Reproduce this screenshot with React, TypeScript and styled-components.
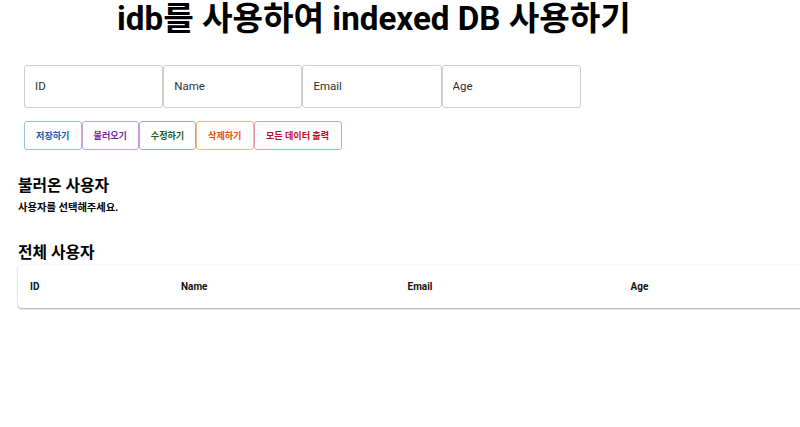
import * as React from 'react';
import styled, { createGlobalStyle } from 'styled-components';

const GlobalStyle = createGlobalStyle`
  html, body {
    margin: 0;
    padding: 0;
    background: #fff;
    overflow: hidden;
    font-family: "Roboto", "Noto Sans CJK KR", sans-serif;
  }
`;

const Page = styled.div`
  width: 800px;
  height: 427px;
  overflow: hidden;
`;

const Title = styled.h1`
  margin: 0;
  padding: 0 52px 0 0;
  height: 65px;
  box-sizing: border-box;
  text-align: center;
  font-size: 33.2px;
  line-height: 38px;
  font-weight: 700;
  color: #000;
  white-space: nowrap;
`;

const Controls = styled.div`
  padding-left: 24px;
`;

const InputRow = styled.div`
  display: flex;
`;

const Field = styled.input`
  width: 139.2px;
  height: 43px;
  box-sizing: border-box;
  padding: 0 10px 2px;
  border: 1px solid #cdcdcd;
  border-radius: 3px;
  background: #fff;
  font-family: inherit;
  font-size: 11.5px;
  font-weight: 400;
  outline: none;

  &::placeholder {
    color: #2e2e2e;
    opacity: 1;
  }
`;

const ButtonRow = styled.div`
  display: flex;
  margin-top: 13px;
`;

const ActionButton = styled.button<{ $tone: string; $edge: string; $width: number }>`
  width: ${p => p.$width}px;
  height: 28.5px;
  box-sizing: border-box;
  padding: 0;
  border: 1px solid ${p => p.$edge};
  border-radius: 3px;
  background: #fff;
  color: ${p => p.$tone};
  font-family: inherit;
  font-size: 9.1px;
  font-weight: 700;
`;

const Section = styled.section`
  padding-left: 18px;
`;

const Heading = styled.h2<{ $top: number }>`
  margin: ${p => p.$top}px 0 0;
  font-size: 15.8px;
  line-height: 22px;
  font-weight: 700;
  color: #000;
`;

const Hint = styled.p`
  margin: 4px 0 0;
  font-size: 10.3px;
  line-height: 14px;
  font-weight: 700;
  color: #000;
`;

const TableCard = styled.div`
  width: 800px;
  height: 43px;
  margin-top: 1px;
  display: grid;
  grid-template-columns: 151px 226.5px 223px 1fr;
  align-items: center;
  padding-left: 12px;
  box-sizing: border-box;
  border-radius: 4px;
  background: #fff;
  box-shadow: 0 1px 2px rgba(0, 0, 0, 0.35), 0 0 2px rgba(0, 0, 0, 0.05);
`;

const ColumnHead = styled.span`
  font-size: 10px;
  font-weight: 700;
  color: #111;
`;

const fields = ['ID', 'Name', 'Email', 'Age'];

const actions = [
    { label: '저장하기', tone: '#0b5cb5', edge: '#93bfe8', width: 57.5 },
    { label: '불러오기', tone: '#7b1fa2', edge: '#c79fdb', width: 57.5 },
    { label: '수정하기', tone: '#1b5e20', edge: '#94bd96', width: 57 },
    { label: '삭제하기', tone: '#e65100', edge: '#eeb98a', width: 57.5 },
    { label: '모든 데이터 출력', tone: '#c00d1e', edge: '#e59aa1', width: 88 },
];

export default function App(): JSX.Element {
    return (
        <Page>
            <GlobalStyle />
            <Title>idb를 사용하여 indexed DB 사용하기</Title>
            <Controls>
                <InputRow>
                    {fields.map(name => (
                        <Field key={name} placeholder={name} />
                    ))}
                </InputRow>
                <ButtonRow>
                    {actions.map(a => (
                        <ActionButton key={a.label} $tone={a.tone} $edge={a.edge} $width={a.width}>
                            {a.label}
                        </ActionButton>
                    ))}
                </ButtonRow>
            </Controls>
            <Section>
                <Heading $top={25}>불러온 사용자</Heading>
                <Hint>사용자를 선택해주세요.</Hint>
                <Heading $top={27}>전체 사용자</Heading>
                <TableCard>
                    {fields.map(name => (
                        <ColumnHead key={name}>{name}</ColumnHead>
                    ))}
                </TableCard>
            </Section>
        </Page>
    );
}
